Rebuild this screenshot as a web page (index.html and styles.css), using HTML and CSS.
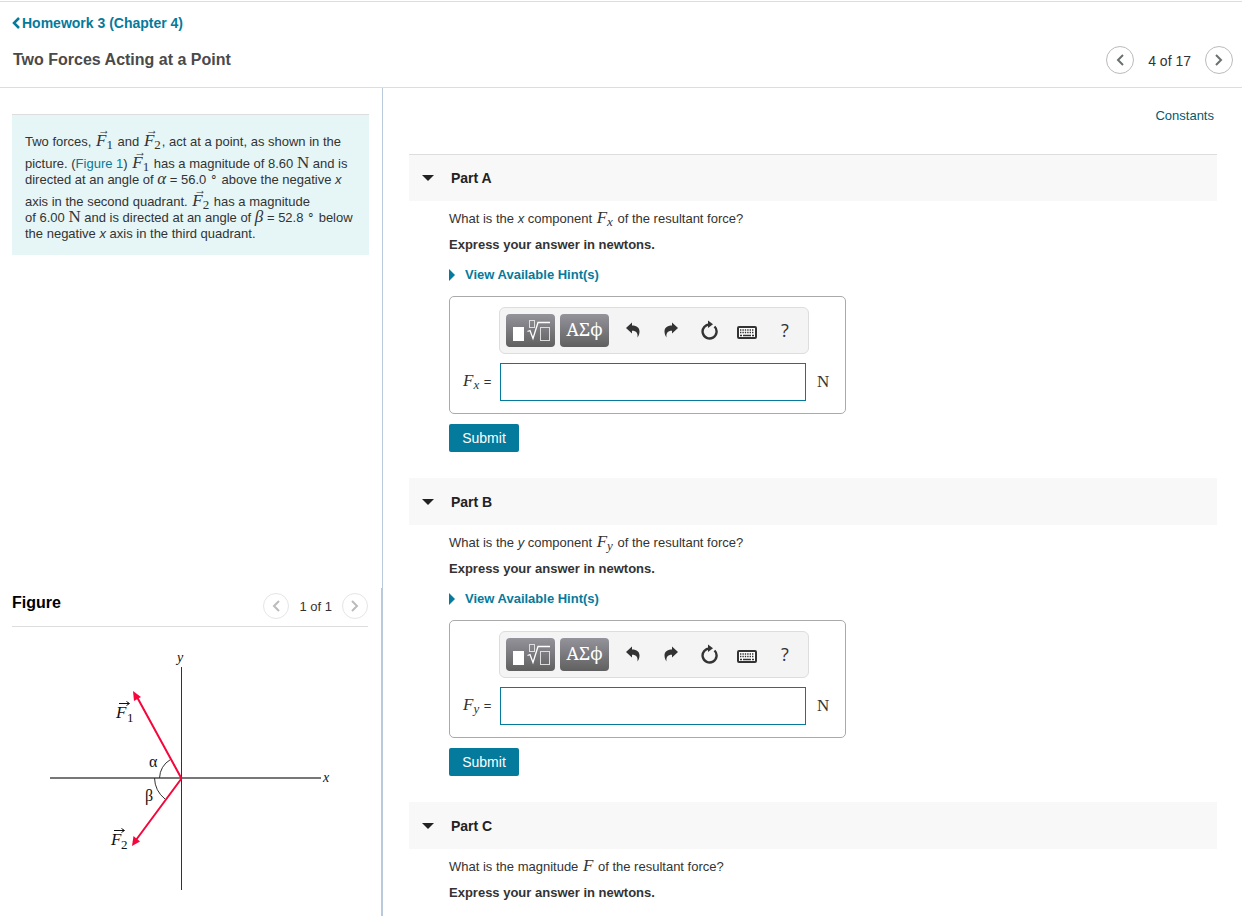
FILE: index.html
```html
<!DOCTYPE html>
<html lang="en">
<head>
    <meta charset="UTF-8">
    <meta name="viewport" content="width=device-width, initial-scale=1.0">
    <title>Two Forces Acting at a Point</title>
    <link rel="stylesheet" href="styles.css">
</head>
<body>
    <!-- Shared icons -->
    <svg class="sprite" aria-hidden="true">
        <symbol id="icon-left" viewBox="0 0 12 16">
            <path d="M9 3 L4 8 L9 13" fill="none" stroke="currentColor" stroke-width="2"/>
        </symbol>
        <symbol id="icon-right" viewBox="0 0 12 16">
            <path d="M3 3 L8 8 L3 13" fill="none" stroke="currentColor" stroke-width="2"/>
        </symbol>
        <symbol id="icon-undo" viewBox="0 0 16 16">
            <path d="M1 6 L7 0.500 V3.500 C12 3.500 14.500 6 14.500 9.500 C14.500 12 13.500 14 12.500 15.500 C13 11 11.500 8.700 7 8.700 V11.500 Z" fill="currentColor"/>
        </symbol>
        <symbol id="icon-redo" viewBox="0 0 16 16">
            <path d="M15 6 L9 0.500 V3.500 C4 3.500 1.500 6 1.500 9.500 C1.500 12 2.500 14 3.500 15.500 C3 11 4.500 8.700 9 8.700 V11.500 Z" fill="currentColor"/>
        </symbol>
        <symbol id="icon-reset" viewBox="0 0 18 20">
            <path d="M10 4.500 A7 7 0 1 0 14.500 6.500" fill="none" stroke="currentColor" stroke-width="2.400"/>
            <path d="M8 0.500 L13 4.300 L8 8 Z" fill="currentColor"/>
        </symbol>
        <symbol id="icon-keyboard" viewBox="0 0 20 13">
            <rect x="1" y="1" width="18" height="11" rx="1" fill="#fff" stroke="currentColor" stroke-width="2"/>
            <path d="M3 4 H17 M3 6.500 H17" stroke="currentColor" stroke-width="1.400" stroke-dasharray="1.400 1"/>
            <path d="M3 9.500 H5 M6 9.500 H14 M15 9.500 H17" stroke="currentColor" stroke-width="1.400"/>
        </symbol>
        <symbol id="icon-template" viewBox="0 0 40 24">
            <rect x="2" y="8" width="11" height="14" fill="#fff"/>
            <rect x="18.500" y="1.500" width="5" height="7" fill="none" stroke="#ddd"/>
            <path d="M16.500 12.500 L19 11.500 L22 19.500 L27 3.500 H39" fill="none" stroke="#fff" stroke-width="1.300"/>
            <rect x="29.500" y="8.500" width="9" height="13" fill="none" stroke="#ddd"/>
        </symbol>
    </svg>

    <header class="header">
        <div class="header-titles">
            <a class="back-link" href="#">
                <svg width="9" height="12" viewBox="0 0 9 12"><path d="M7 1 L2 6 L7 11" fill="none" stroke="currentColor" stroke-width="2.500"/></svg>Homework 3 (Chapter 4)
            </a>
            <h1>Two Forces Acting at a Point</h1>
        </div>
        <nav class="pager">
            <button class="round" aria-label="Previous item"><svg width="12" height="16"><use href="#icon-left"/></svg></button>
            <span>4 of 17</span>
            <button class="round" aria-label="Next item"><svg width="12" height="16"><use href="#icon-right"/></svg></button>
        </nav>
    </header>

    <main class="layout">
        <aside class="left">
            <div class="problem">
                <p class="statement">
                    Two forces, <span class="vec">F<sub>1</sub></span> and <span class="vec">F<sub>2</sub></span>,
                    act at a point, as shown in the picture. <a href="#figure">(<span>Figure 1</span>)</a>
                    <span class="vec">F<sub>1</sub></span> has a magnitude of 8.60&nbsp;<span class="unit">N</span> and is
                    directed at an angle of <span class="greek">α</span>&nbsp;= 56.0&nbsp;<span class="deg">∘</span>
                    above the negative <i>x</i> axis in the second quadrant.
                    <span class="vec">F<sub>2</sub></span> has a magnitude of&nbsp;6.00&nbsp;<span class="unit">N</span>
                    and is directed at an angle of <span class="greek">β</span>&nbsp;= 52.8&nbsp;<span class="deg">∘</span>
                    below the negative <i>x</i> axis in the third quadrant.
                </p>
            </div>

            <section class="figure" id="figure">
                <div class="figure-head">
                    <h2>Figure</h2>
                    <nav class="pager pager-small">
                        <button class="round" aria-label="Previous figure" disabled><svg width="12" height="16"><use href="#icon-left"/></svg></button>
                        <span>1 of 1</span>
                        <button class="round" aria-label="Next figure" disabled><svg width="12" height="16"><use href="#icon-right"/></svg></button>
                    </nav>
                </div>
                <svg class="diagram" width="356" height="270" viewBox="12 627 356 270" role="img" aria-label="Forces F1 and F2 acting at the origin">
                    <path d="M50 778 H321" stroke="#777" stroke-width="2"/>
                    <path d="M181.500 667 V890" stroke="#333"/>
                    <path d="M159.500 778 A23 23 0 0 1 170.500 759.500 M154.500 778 A28 28 0 0 0 165 799" fill="none" stroke="#333"/>
                    <path d="M181.500 778.500 L137 697 M181.500 778.500 L136 840" stroke="#f5063c" stroke-width="2"/>
                    <path d="M133 691 L141 697 L134 701 Z M132 846 L133.500 836 L140 841.500 Z" fill="#f5063c"/>
                    <g class="diagram-text">
                        <text x="177" y="662" class="axis">y</text>
                        <text x="323" y="782" class="axis">x</text>
                        <text x="149" y="767" class="angle">α</text>
                        <text x="145" y="801" class="angle">β</text>
                        <text x="116" y="718" class="force">F</text>
                        <text x="127" y="722" class="index">1</text>
                        <text x="111" y="845" class="force">F</text>
                        <text x="121" y="849" class="index">2</text>
                    </g>
                    <path d="M119 703.500 H129 M126.500 701.500 L129.500 703.500 L126.500 705.500 M114 830.500 H124 M121.500 828.500 L124.500 830.500 L121.500 832.500" fill="none" stroke="#111"/>
                </svg>
            </section>
        </aside>

        <div class="right">
            <div class="constants"><a href="#">Constants</a></div>

            <section class="part">
                <h2 class="part-head"><button><span class="arrow-down"></span>Part A</button></h2>
                <div class="part-body">
                    <p>What is the <i>x</i> component <span class="math">F<sub>x</sub></span> of the resultant force?</p>
                    <p class="express">Express your answer in newtons.</p>
                    <button class="hint"><span class="arrow-right"></span>View Available Hint(s)</button>
                    <form class="answer">
                        <div class="toolbar">
                            <button type="button" class="dark" aria-label="Templates"><svg width="40" height="24"><use href="#icon-template"/></svg></button>
                            <button type="button" class="dark greek-button">ΑΣϕ</button>
                            <button type="button" class="tool" aria-label="Undo"><svg width="16" height="16"><use href="#icon-undo"/></svg></button>
                            <button type="button" class="tool" aria-label="Redo"><svg width="16" height="16"><use href="#icon-redo"/></svg></button>
                            <button type="button" class="tool" aria-label="Reset"><svg width="18" height="20"><use href="#icon-reset"/></svg></button>
                            <button type="button" class="tool" aria-label="Keyboard shortcuts"><svg class="keyboard" width="20" height="13"><use href="#icon-keyboard"/></svg></button>
                            <button type="button" class="tool help">?</button>
                        </div>
                        <label for="answer-x"><span class="math">F<sub>x</sub></span> =</label>
                        <input type="text" id="answer-x">
                        <span class="unit">N</span>
                    </form>
                    <button class="submit">Submit</button>
                </div>
            </section>

            <section class="part">
                <h2 class="part-head"><button><span class="arrow-down"></span>Part B</button></h2>
                <div class="part-body">
                    <p>What is the <i>y</i> component <span class="math">F<sub>y</sub></span> of the resultant force?</p>
                    <p class="express">Express your answer in newtons.</p>
                    <button class="hint"><span class="arrow-right"></span>View Available Hint(s)</button>
                    <form class="answer">
                        <div class="toolbar">
                            <button type="button" class="dark" aria-label="Templates"><svg width="40" height="24"><use href="#icon-template"/></svg></button>
                            <button type="button" class="dark greek-button">ΑΣϕ</button>
                            <button type="button" class="tool" aria-label="Undo"><svg width="16" height="16"><use href="#icon-undo"/></svg></button>
                            <button type="button" class="tool" aria-label="Redo"><svg width="16" height="16"><use href="#icon-redo"/></svg></button>
                            <button type="button" class="tool" aria-label="Reset"><svg width="18" height="20"><use href="#icon-reset"/></svg></button>
                            <button type="button" class="tool" aria-label="Keyboard shortcuts"><svg class="keyboard" width="20" height="13"><use href="#icon-keyboard"/></svg></button>
                            <button type="button" class="tool help">?</button>
                        </div>
                        <label for="answer-y"><span class="math">F<sub>y</sub></span> =</label>
                        <input type="text" id="answer-y">
                        <span class="unit">N</span>
                    </form>
                    <button class="submit">Submit</button>
                </div>
            </section>

            <section class="part">
                <h2 class="part-head"><button><span class="arrow-down"></span>Part C</button></h2>
                <div class="part-body">
                    <p>What is the magnitude <span class="math">F</span> of the resultant force?</p>
                    <p class="express">Express your answer in newtons.</p>
                </div>
            </section>
        </div>
    </main>
</body>
</html>
```
FILE: styles.css
```css
* {
    margin: 0;
    padding: 0;
    box-sizing: border-box;
}

body {
    display: flex;
    flex-direction: column;
    min-height: 100vh;
    padding-top: 1px;
    background-color: #fff;
    color: #333;
    font-family: "Liberation Sans", Arial, sans-serif;
    font-size: 13px;
    line-height: 16px;
}

a {
    color: #047a9c;
    text-decoration: none;
}

button {
    border: none;
    background: none;
    font-family: inherit;
    cursor: pointer;
}

.sprite {
    display: none;
}

/* Header */
.header {
    display: flex;
    justify-content: space-between;
    height: 87px;
    padding: 13px 9px 0 12px;
    border-top: 1px solid #ddd;
    border-bottom: 1px solid #ddd;
}

.back-link {
    display: flex;
    align-items: center;
    gap: 1px;
    font-size: 14px;
    font-weight: bold;
}

.header h1 {
    margin: 19px 0 0 1px;
    color: #4a4a4a;
    font-size: 16px;
    line-height: 20px;
}

.pager {
    display: flex;
    align-items: center;
    gap: 14px;
    height: 28px;
    font-size: 14px;
}

.pager span {
    padding-top: 2px;
}

.header .pager {
    margin-top: 31px;
}

.round {
    display: flex;
    align-items: center;
    justify-content: center;
    width: 28px;
    height: 28px;
    border: 1px solid #bbb;
    border-radius: 50%;
    color: #6a7070;
}

.pager-small {
    gap: 10px;
    height: 26px;
    font-size: 13px;
}

.pager-small .round {
    width: 26px;
    height: 26px;
    border-color: #e5e5e5;
    color: #bbb;
}

.layout {
    display: flex;
    flex: 1;
}

/* Left column */
.left {
    display: flex;
    flex: 0 0 383px;
    flex-direction: column;
    border-right: 1px solid #b8cadb;
}

.problem {
    flex: 1;
    padding: 26px 13px 0 12px;
}

.statement {
    padding: 13px;
    border-top: 1px solid #ddd;
    background-color: #e6f6f7;
}

.statement a {
    color: #333;
}

.statement a span {
    color: #047a9c;
}

.math,
.vec,
.greek,
.unit {
    font-family: "Liberation Serif", "Times New Roman", serif;
    font-size: 17px;
    line-height: 12px;
}

.math,
.vec,
.greek {
    font-style: italic;
}

.math,
.vec {
    margin: 0 1px;
}

.math sub,
.vec sub {
    font-size: 13px;
    line-height: 0;
    vertical-align: -3px;
}

.vec {
    display: inline-block;
    position: relative;
    padding-top: 7px;
}

.vec sub {
    font-style: normal;
}

/* Arrow over the letter */
.vec::before {
    content: "→";
    position: absolute;
    top: -2px;
    left: 2px;
    font-size: 12px;
    font-style: normal;
    line-height: 8px;
}

.deg {
    font-size: 12px;
    line-height: 0;
    vertical-align: 3px;
}

.figure {
    height: 328px;
    padding: 5px 13px 0 12px;
    border-right: 1px solid #b8cadb;
}

.figure-head {
    display: flex;
    align-items: flex-start;
    justify-content: space-between;
    height: 34px;
    border-bottom: 1px solid #ddd;
}

.figure-head h2 {
    color: #000;
    font-size: 16px;
    line-height: 20px;
}

.diagram {
    display: block;
}

.diagram-text {
    fill: #111;
    font-family: "Liberation Serif", "Times New Roman", serif;
}

.axis {
    font-size: 14px;
    font-style: italic;
}

.angle {
    font-size: 16px;
}

.force {
    font-size: 17px;
    font-style: italic;
}

.index {
    font-size: 13px;
}

/* Right column */
.right {
    flex: 1;
    padding: 20px 25px 0 26px;
}

.constants {
    height: 46px;
    padding-right: 3px;
    text-align: right;
}

.constants a {
    color: #005a70;
}

.part {
    margin-bottom: 26px;
    border-top: 1px solid #f8f8f8;
}

.part:last-child {
    margin-bottom: 0;
}

.constants + .part {
    border-top-color: #ddd;
}

.part-head {
    height: 46px;
    background-color: #f8f8f8;
}

.part-head button {
    display: flex;
    align-items: center;
    width: 100%;
    height: 46px;
    padding-left: 13px;
    color: #222;
    font-size: 14px;
    font-weight: bold;
}

.arrow-down {
    margin-right: 17px;
    border: 6px solid transparent;
    border-top-color: #222;
    border-bottom: none;
}

.part-body {
    padding: 10px 0 0 40px;
}

.express {
    margin-top: 10px;
    font-weight: bold;
}

.hint {
    display: flex;
    align-items: center;
    margin-top: 14px;
    color: #047a9c;
    font-size: 13px;
    font-weight: bold;
    line-height: 16px;
}

.arrow-right {
    margin-right: 10px;
    border: 6px solid transparent;
    border-left-color: #047a9c;
    border-right: none;
}

.answer {
    display: grid;
    grid-template-columns: 37px 310px auto;
    row-gap: 9px;
    align-items: center;
    width: 397px;
    margin-top: 13px;
    padding: 10px 12px 12px;
    border: 1px solid #aaa;
    border-radius: 5px;
}

.toolbar {
    display: flex;
    grid-column: 2 / 4;
    gap: 5px;
    align-items: center;
    width: 310px;
    height: 47px;
    padding-left: 6px;
    border: 1px solid #ddd;
    border-radius: 6px;
    background-color: #f4f4f4;
}

.dark {
    display: flex;
    align-items: center;
    justify-content: center;
    width: 49px;
    height: 33px;
    border-radius: 4px;
    background: linear-gradient(#94939b, #606060);
    color: #fff;
}

.greek-button {
    padding-bottom: 4px;
    font-family: "Noto Serif", "Liberation Serif", serif;
    font-size: 18px;
}

.tool {
    display: flex;
    align-items: center;
    justify-content: center;
    width: 38px;
    height: 33px;
    padding-bottom: 2px;
    color: #333;
}

.tool + .tool {
    margin-left: -5px;
}

.keyboard {
    margin-top: 5px;
}

.help {
    font-family: "Open Sans", sans-serif;
    font-size: 18px;
}

.answer label {
    grid-column: 1;
    white-space: nowrap;
}

.answer input {
    grid-column: 2;
    width: 306px;
    height: 38px;
    margin-left: 1px;
    padding: 0 8px;
    border: 1px solid #047a9c;
    font-size: 16px;
}

.answer > .unit {
    padding-left: 8px;
}

.submit {
    display: block;
    width: 70px;
    height: 28px;
    margin-top: 10px;
    border-radius: 2px;
    background-color: #047a9c;
    color: #fff;
    font-size: 14px;
}
```
